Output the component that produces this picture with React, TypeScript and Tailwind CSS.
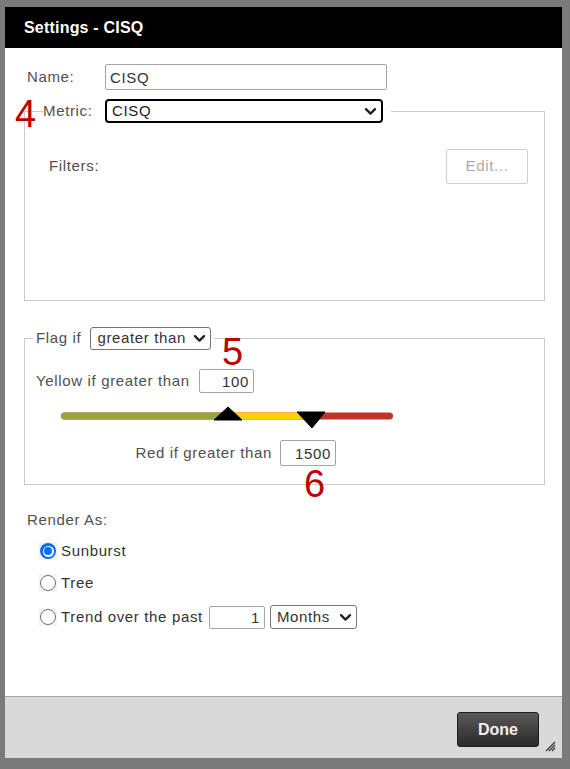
import React from 'react';

const Chevron: React.FC = () => (
  <svg width="13" height="9" viewBox="0 0 13 9" className="shrink-0">
    <path d="M2 2.2 L6.5 6.6 L11 2.2" fill="none" stroke="#222" strokeWidth="2.4" strokeLinecap="round" strokeLinejoin="round" />
  </svg>
);

const Radio: React.FC<{ checked?: boolean }> = ({ checked }) => (
  <span className="w-[18px] h-[18px] flex items-center justify-center bg-[#f4f4f4]">
    {checked ? (
      <span className="w-[16px] h-[16px] rounded-full bg-[#0a6cff] flex items-center justify-center">
        <span className="w-[11px] h-[11px] rounded-full bg-white flex items-center justify-center">
          <span className="w-[8px] h-[8px] rounded-full bg-[#0a6cff]" />
        </span>
      </span>
    ) : (
      <span className="w-[16px] h-[16px] rounded-full border border-[#707070] bg-white" />
    )}
  </span>
);

const Slider: React.FC = () => (
  <svg width="340" height="26" viewBox="0 0 340 26" className="block ml-[34px] mt-[11px]">
    <line x1="5.5" y1="12" x2="330.5" y2="12" stroke="#c0342b" strokeWidth="7" strokeLinecap="round" />
    <line x1="5.5" y1="12" x2="150" y2="12" stroke="#98a63c" strokeWidth="7" strokeLinecap="round" />
    <rect x="150" y="8.5" width="20" height="7" fill="#98a63c" />
    <rect x="169" y="8.5" width="84" height="7" fill="#fcd100" />
    <path d="M155 16 L169 3 L183 16 Z" fill="#000" stroke="#000" strokeWidth="1" strokeLinejoin="round" />
    <path d="M238 8 L266 8 L253 24 Z" fill="#000" stroke="#000" strokeWidth="1" strokeLinejoin="round" />
  </svg>
);

export default function App() {
  return (
    <div className="relative w-[570px] h-[769px] bg-[#7b7b7b] pt-[7px] pl-[5px] pr-[8px] pb-[11px] overflow-hidden font-['Liberation_Sans',Arial,sans-serif] text-[15px] text-[#505050]">
      <div className="flex flex-col h-full bg-white">
        {/* title */}
        <div className="h-[41px] shrink-0 bg-black flex items-center pl-[19px]">
          <span className="text-white font-bold text-[16px] tracking-[0.2px]">Settings - CISQ</span>
        </div>

        {/* body */}
        <div className="flex-1 pl-[19px] tracking-[0.65px]">
          <div className="flex items-center mt-[16px] pl-[3px]">
            <span className="w-[78px]">Name:</span>
            <input
              defaultValue="CISQ"
              className="w-[282px] h-[26px] border border-[#a5a5a5] rounded-[2px] pl-[4px] text-[#333] outline-none"
            />
          </div>

          <fieldset className="mt-[9px] w-[521px] h-[202px] border border-[#cccccc] p-0 m-0 min-w-0">
            <legend className="ml-[18px] pr-[8px] flex items-center">
              <span className="w-[62px]">Metric:</span>
              <div className="w-[278px] h-[24px] border-2 border-black rounded-[4px] flex items-center justify-between pl-[5px] pr-[4px] text-[#222]">
                <span>CISQ</span>
                <Chevron />
              </div>
            </legend>
            <div className="flex items-center justify-between mt-[26px] pl-[24px] pr-[16px]">
              <span>Filters:</span>
              <button className="w-[82px] h-[35px] border border-[#cfcfcf] rounded-[2px] text-[#aaaaaa] bg-white">
                Edit...
              </button>
            </div>
          </fieldset>

          <fieldset className="mt-[26px] w-[521px] border border-[#cccccc] p-0 pb-[18px] m-0 min-w-0">
            <legend className="ml-[8px] px-[3px] flex items-center">
              <span>Flag if</span>
              <div className="ml-[9px] w-[121px] h-[23px] border border-[#767676] rounded-[3px] flex items-center justify-between pl-[6px] pr-[4px] text-[#333]">
                <span>greater than</span>
                <Chevron />
              </div>
            </legend>
            <div className="flex items-center mt-[19px] pl-[11px]">
              <span className="w-[163px]">Yellow if greater than</span>
              <input
                defaultValue="100"
                className="w-[55px] h-[24px] border border-[#a5a5a5] rounded-[2px] text-right pr-[4px] text-[#333] outline-none"
              />
            </div>
            <Slider />
            <div className="flex items-center mt-[10px]">
              <span className="w-[255px] text-right pr-[8px]">Red if greater than</span>
              <input
                defaultValue="1500"
                className="w-[56px] h-[26px] border border-[#a5a5a5] rounded-[2px] text-right pr-[4px] text-[#333] outline-none"
              />
            </div>
          </fieldset>

          <div className="mt-[26px] pl-[3px] h-[18px] flex items-center">Render As:</div>
          <div className="pl-[15px] text-[#333]">
            <div className="flex items-center h-[24px] mt-[10px] gap-[4px]">
              <Radio checked />
              <span>Sunburst</span>
            </div>
            <div className="flex items-center h-[24px] mt-[8px] gap-[4px]">
              <Radio />
              <span>Tree</span>
            </div>
            <div className="flex items-center h-[24px] mt-[10px] gap-[4px]">
              <Radio />
              <span>Trend over the past</span>
              <input
                defaultValue="1"
                className="ml-[2px] w-[56px] h-[23px] border border-[#a5a5a5] rounded-[2px] text-right pr-[4px] text-[#333] outline-none"
              />
              <div className="ml-[1px] w-[87px] h-[24px] border border-[#767676] rounded-[3px] flex items-center justify-between pl-[6px] pr-[4px]">
                <span>Months</span>
                <Chevron />
              </div>
            </div>
          </div>
        </div>

        {/* footer */}
        <div className="relative h-[62px] shrink-0 bg-[#d9d9d9] border-t border-[#a3a3a3] flex justify-end items-start pt-[15px] pr-[23px]">
          <button className="w-[82px] h-[35px] rounded-[3px] border border-[#1e1e1e] bg-gradient-to-b from-[#5a5a5a] to-[#2a2a2a] text-[#f0f0f0] font-bold text-[16px]">
            Done
          </button>
          <svg width="11" height="11" viewBox="0 0 11 11" className="absolute right-[6px] bottom-[6px]">
            <path d="M10 1 L1 10 M10 4 L4 10 M10 7 L7 10" stroke="#333" strokeWidth="1.2" />
          </svg>
        </div>
      </div>

      {/* annotation numbers */}
      <span className="absolute left-[15px] top-[95px] text-[38px] leading-none text-[#c00000]">4</span>
      <span className="absolute left-[222px] top-[333px] text-[38px] leading-none text-[#c00000]">5</span>
      <span className="absolute left-[304px] top-[465px] text-[38px] leading-none text-[#c00000]">6</span>
    </div>
  );
}
